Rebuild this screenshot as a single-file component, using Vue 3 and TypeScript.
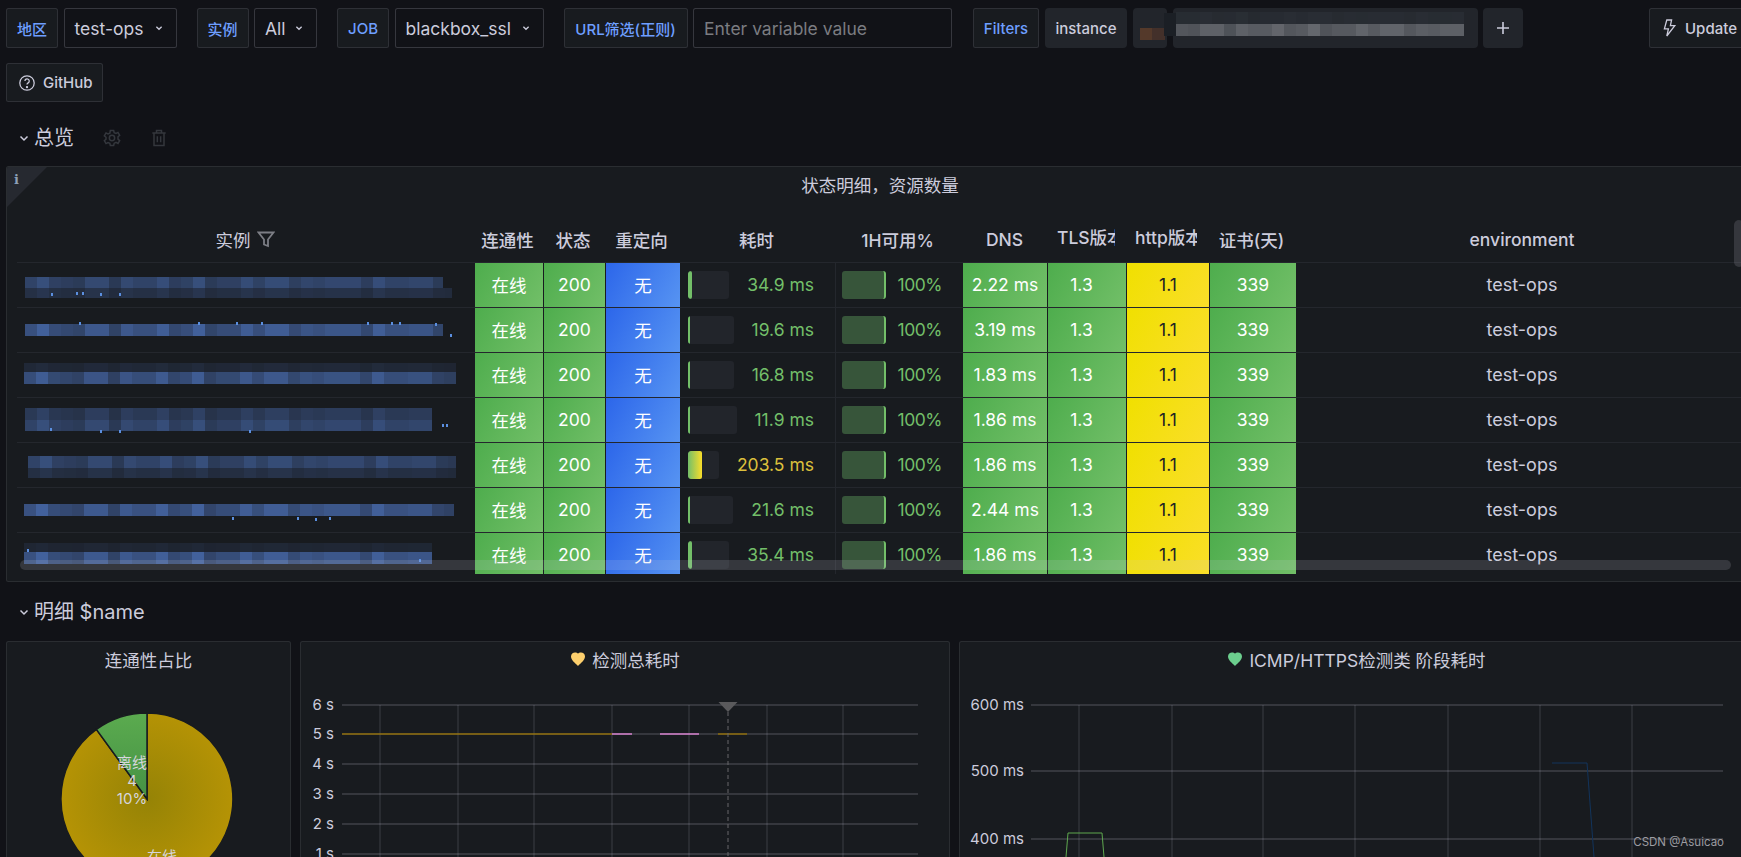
<script setup lang="ts">
const pattern = [0.6, 1, 0.5, 0.4, 0.3, 0.8, 0.8, 0.25, 0.8, 0.6, 0.6, 0.95, 0.4, 0.55, 1, 0.3, 0.5, 0.5, 0.9, 0.55, 0.9, 0.9, 0.45, 0.7, 0.6, 0.75, 0.75, 0.75, 0.4, 0.95, 0.6, 0.6, 0.7, 0.7, 0.3, 0.2]

type Rgb = [number, number, number]

function mosaic(width: number, level: number, from: Rgb, to: Rgb, offset = 0): string {
  const stops: string[] = []
  const count = Math.ceil(width / 12)
  for (let i = 0; i < count; i++) {
    const p = pattern[(i + offset) % pattern.length]
    const t = Math.min(1, level * (0.4 + 0.6 * p))
    const c = from.map((f, k) => Math.round(f + (to[k] - f) * t))
    stops.push(`rgb(${c.join(',')}) ${i * 12}px ${(i + 1) * 12}px`)
  }
  return `linear-gradient(90deg, ${stops.join(', ')})`
}

const navy: Rgb = [27, 31, 39]
const blue: Rgb = [66, 97, 156]

interface Band { x: number; w: number; h: number; level: number }
interface Row {
  top: number
  bands: Band[]
  specks: [number, number][]
  ms: string
  fill: number
  warn?: boolean
  dns: string
}

const rows: Row[] = [
  { top: 14, bands: [{ x: 8, w: 418, h: 11, level: 0.72 }, { x: 8, w: 427, h: 10, level: 0.34 }], specks: [[34, 30], [59, 29], [65, 29], [83, 30], [102, 30]], ms: '34.9 ms', fill: 4, dns: '2.22 ms' },
  { top: 16, bands: [{ x: 8, w: 418, h: 12, level: 0.98 }], specks: [[62, 14], [181, 14], [219, 14], [244, 14], [350, 14], [374, 14], [382, 14], [418, 15], [433, 26]], ms: '19.6 ms', fill: 2, dns: '3.19 ms' },
  { top: 10, bands: [{ x: 7, w: 432, h: 9, level: 0.18 }, { x: 7, w: 432, h: 12, level: 0.92 }], specks: [], ms: '16.8 ms', fill: 2, dns: '1.83 ms' },
  { top: 10, bands: [{ x: 8, w: 407, h: 12, level: 0.52 }, { x: 8, w: 407, h: 11, level: 0.72 }], specks: [[33, 30], [83, 32], [102, 32], [232, 32], [425, 26], [429, 26]], ms: '11.9 ms', fill: 2, dns: '1.86 ms' },
  { top: 13, bands: [{ x: 11, w: 428, h: 12, level: 0.72 }, { x: 11, w: 428, h: 10, level: 0.32 }], specks: [], ms: '203.5 ms', fill: 14, warn: true, dns: '1.86 ms' },
  { top: 16, bands: [{ x: 7, w: 430, h: 12, level: 1 }], specks: [[215, 29], [280, 29], [298, 30], [312, 29]], ms: '21.6 ms', fill: 2, dns: '2.44 ms' },
  { top: 10, bands: [{ x: 7, w: 408, h: 9, level: 0.14 }, { x: 7, w: 408, h: 12, level: 1 }], specks: [[10, 16], [402, 26]], ms: '35.4 ms', fill: 4, dns: '1.86 ms' },
]

const headers = [
  { text: '实例', cls: 'h-inst' },
  { text: '连通性', cls: 'h-cjk' },
  { text: '状态', cls: 'h-cjk' },
  { text: '重定向', cls: 'h-cjk' },
  { text: '耗时', cls: 'h-cjk' },
  { text: '1H可用%', cls: 'h-cjk' },
  { text: 'DNS', cls: 'h-dns' },
  { text: 'TLS版本', cls: 'h-clip' },
  { text: 'http版本', cls: 'h-clip h-http' },
  { text: '证书(天)', cls: 'h-cjk' },
  { text: 'environment', cls: '' },
]

const chipBand = mosaic(288, 0.75, [52, 56, 62], [116, 118, 124], 3)
const chipDim = mosaic(288, 0.2, [34, 37, 43], [70, 80, 90], 9)

const totalGrid = [705, 734, 764, 794, 824, 854]
const totalLabels = ['6 s', '5 s', '4 s', '3 s', '2 s', '1 s']
const totalVert = [380, 458, 534, 612, 689, 767, 843]
const phaseGrid = [705, 771, 839]
const phaseLabels = ['600 ms', '500 ms', '400 ms']
const phaseVert = [1079, 1172, 1263, 1355, 1448, 1540, 1632]
const heartPath = 'M8 15C5 12 1 9 1 5.500 1 3 3 1.500 5 1.500c1.300 0 2.400.5 3 1 .6-.5 1.700-1 3-1 2 0 4 1.500 4 4 0 3.500-4 6.500-7 9.500z'
</script>

<template>
  <div class="viewport">
    <div class="page">
      <div class="toolbar">
        <div class="group">
          <span class="label">地区</span>
          <span class="select sel-region">test-ops
            <svg class="chev" viewBox="0 0 16 16"><path d="M5 6.500l3 3 3-3" /></svg>
          </span>
        </div>
        <div class="group">
          <span class="label">实例</span>
          <span class="select sel-inst">All
            <svg class="chev" viewBox="0 0 16 16"><path d="M5 6.500l3 3 3-3" /></svg>
          </span>
        </div>
        <div class="group">
          <span class="label">JOB</span>
          <span class="select sel-job">blackbox_ssl
            <svg class="chev" viewBox="0 0 16 16"><path d="M5 6.500l3 3 3-3" /></svg>
          </span>
        </div>
        <div class="group">
          <span class="label label-url">URL筛选(正则)</span>
          <span class="input">Enter variable value</span>
        </div>
        <div class="group group-filters">
          <span class="label label-filters">Filters</span>
          <span class="chip chip-key">instance</span>
          <span class="chip chip-op">
            <span class="op-blur"></span>
            <span class="op-bar"></span>
          </span>
          <span class="chip chip-val">
            <span class="blur-dim" :style="{ background: chipDim }"></span>
            <span class="blur-main" :style="{ background: chipBand }"></span>
          </span>
          <span class="chip chip-add">
            <svg viewBox="0 0 16 16" class="plus"><path d="M8 2v12M2 8h12" /></svg>
          </span>
        </div>
        <span class="btn btn-update">
          <svg viewBox="0 0 20 24" class="bolt"><path d="M12 2H6L3 13h5l-2 9 10-13h-5.500z" /></svg>
          Update
        </span>
      </div>

      <div class="links">
        <span class="btn btn-link">
          <svg viewBox="0 0 20 20" class="help">
            <circle cx="10" cy="10" r="8" />
            <path d="M7.700 7.800a2.400 2.400 0 1 1 3.600 2.100c-.9.5-1.300 1-1.300 1.900" />
            <circle class="dot" cx="10" cy="14.500" r=".6" />
          </svg>
          GitHub
        </span>
      </div>

      <div class="section section-first">
        <svg class="sec-chev" viewBox="0 0 16 16"><path d="M4.500 6.500l3.500 3.500 3.500-3.500" /></svg>
        <span class="sec-title">总览</span>
        <svg class="sec-icon gear" viewBox="0 0 24 24">
          <circle cx="12" cy="12" r="3.200" />
          <path d="M10 3h4l.6 2.600 2.200 1 2.400-1.300 2 3.400-2 1.800v2.900l2 1.800-2 3.400-2.400-1.300-2.200 1L14 21h-4l-.6-2.600-2.200-1-2.400 1.300-2-3.400 2-1.800V11.100l-2-1.800 2-3.400 2.400 1.300 2.200-1z" />
        </svg>
        <svg class="sec-icon trash" viewBox="0 0 24 24">
          <path d="M4 6h16M9 6V3h6v3M6 6v15h12V6M10 10v7M14 10v7" />
        </svg>
      </div>

      <div class="panel panel-table">
        <span class="corner"></span>
        <span class="corner-i">i</span>
        <div class="panel-title">状态明细，资源数量</div>
        <div class="table">
          <div class="tr thead">
            <div v-for="h in headers" :key="h.text" class="th" :class="h.cls">
              <span class="th-text">{{ h.text }}</span>
              <svg v-if="h.cls === 'h-inst'" class="filter" viewBox="0 0 18 18">
                <path d="M1.500 2.500h15L11 9.500V16l-4-1.500V9.500z" />
              </svg>
            </div>
          </div>
          <div v-for="(r, i) in rows" :key="i" class="tr">
            <div class="td inst" :style="{ paddingTop: r.top + 'px' }">
              <span
                v-for="(b, j) in r.bands"
                :key="j"
                class="band"
                :style="{ marginLeft: b.x + 'px', width: b.w + 'px', height: b.h + 'px', background: mosaic(b.w, b.level, navy, blue) }"
              ></span>
              <span
                v-for="(s, k) in r.specks"
                :key="'s' + k"
                class="speck"
                :style="{ left: s[0] + 'px', top: s[1] + 'px' }"
              ></span>
            </div>
            <div class="td cell green">在线</div>
            <div class="td cell green">200</div>
            <div class="td cell blue">无</div>
            <div class="td gauge ms" :class="{ warn: r.warn }">
              <span class="track"><span class="fill" :style="{ width: r.fill + 'px' }"></span></span>
              <span class="val">{{ r.ms }}</span>
            </div>
            <div class="td gauge avail">
              <span class="track full"></span>
              <span class="val">100%</span>
            </div>
            <div class="td cell green">{{ r.dns }}</div>
            <div class="td cell green tls">1.3</div>
            <div class="td cell yellow">1.1</div>
            <div class="td cell green">339</div>
            <div class="td env">test-ops</div>
          </div>
        </div>
        <span class="scroll-h"></span>
        <span class="scroll-v"></span>
      </div>

      <div class="section section-second">
        <svg class="sec-chev" viewBox="0 0 16 16"><path d="M4.500 6.500l3.500 3.500 3.500-3.500" /></svg>
        <span class="sec-title">明细 $name</span>
      </div>

      <div class="charts">
        <div class="panel chart">
          <div class="panel-title">连通性占比</div>
          <svg class="plot" viewBox="7 687 283 170">
            <defs>
              <radialGradient id="gold" gradientUnits="userSpaceOnUse" cx="147" cy="798" r="86">
                <stop offset="0" stop-color="#958306" />
                <stop offset="1" stop-color="#b59305" />
              </radialGradient>
              <linearGradient id="leaf" x1="0" y1="0" x2="0" y2="1">
                <stop offset="0" stop-color="#5bab4f" />
                <stop offset="1" stop-color="#459144" />
              </linearGradient>
            </defs>
            <path d="M147 799V713A86 86 0 1 1 96.400 729.400Z" fill="url(#gold)" stroke="#181b1f" stroke-width="1.500" />
            <path d="M147 799L96.400 729.400A86 86 0 0 1 147 713Z" fill="url(#leaf)" stroke="#181b1f" stroke-width="1.500" />
            <text class="pie-text" x="132" y="768">离线</text>
            <text class="pie-text" x="132" y="786">4</text>
            <text class="pie-text" x="132" y="804">10%</text>
            <text class="pie-text" x="162" y="862">在线</text>
          </svg>
        </div>

        <div class="panel chart">
          <div class="panel-title"><svg class="heart" viewBox="0 0 16 16"><path :d="heartPath" fill="#fccf6d" /></svg>检测总耗时</div>
          <svg class="plot" viewBox="301 687 648 170">
            <line v-for="y in totalGrid" :key="y" class="grid-h" x1="342" x2="918" :y1="y" :y2="y" />
            <line v-for="x in totalVert" :key="x" class="grid-v" :x1="x" :x2="x" y1="705" y2="857" />
            <text v-for="(t, k) in totalLabels" :key="t" class="axis" x="334" :y="totalGrid[k] + 5">{{ t }}</text>
            <path d="M342 734H612" class="s-gold" />
            <path d="M612 734H632M660 734H699" class="s-pink" />
            <path d="M718 734H747" class="s-gold" />
            <path d="M728 712V857" class="anno" />
            <path d="M718.500 702H737.500L728 712Z" fill="#5a5a5c" />
          </svg>
        </div>

        <div class="panel chart">
          <div class="panel-title"><svg class="heart" viewBox="0 0 16 16"><path :d="heartPath" fill="#6ccf8e" /></svg>ICMP/HTTPS检测类 阶段耗时</div>
          <svg class="plot" viewBox="960 687 793 170">
            <line v-for="y in phaseGrid" :key="y" class="grid-h" x1="1031" x2="1723" :y1="y" :y2="y" />
            <line v-for="x in phaseVert" :key="x" class="grid-v" :x1="x" :x2="x" y1="705" y2="857" />
            <text v-for="(t, k) in phaseLabels" :key="t" class="axis" x="1024" :y="phaseGrid[k] + 5">{{ t }}</text>
            <path d="M1066 857L1068 833H1102L1104 857" class="s-green" />
            <path d="M1552 763H1587L1594 857" class="s-navy" />
          </svg>
        </div>
      </div>
    </div>
    <span class="watermark">CSDN @Asuicao</span>
  </div>
</template>

<style>
html, body { margin: 0; background: #111217; }
</style>

<style scoped>
.viewport {
  position: relative;
  width: 1741px;
  height: 857px;
  overflow: hidden;
  background: #111217;
  color: #ccccdc;
  font-family: Inter, "Noto Sans CJK SC", sans-serif;
  font-size: 17.5px;
}
.page { width: 1754px; padding-top: 8px; box-sizing: border-box; }

.toolbar { display: flex; gap: 20px; padding-left: 6px; height: 40px; }
.group { display: flex; gap: 5.5px; }
.group-filters { gap: 6px; margin-left: 1px; }
.label, .select, .input, .chip, .btn {
  display: flex;
  align-items: center;
  box-sizing: border-box;
  height: 40px;
  border-radius: 2.5px;
  white-space: nowrap;
}
.label {
  width: 52px;
  justify-content: center;
  background: #181b1f;
  border: 1px solid rgba(204, 204, 220, 0.12);
  color: #6e9fff;
  font-size: 15px;
  font-weight: 500;
}
.label-url { width: 124px; }
.label-filters { width: 66px; }
.select {
  justify-content: space-between;
  padding: 0 10px 0 10px;
  background: #111217;
  border: 1px solid rgba(204, 204, 220, 0.2);
  font-size: 17.5px;
}
.sel-region { width: 113px; }
.sel-inst { width: 63px; }
.sel-job { width: 149px; }
.chev { width: 14px; height: 14px; fill: none; stroke: #ccccdc; stroke-width: 1.5; flex: none; }
.input {
  width: 259px;
  padding-left: 10px;
  background: #111217;
  border: 1px solid rgba(204, 204, 220, 0.2);
  color: #7b7c81;
}
.chip { background: #22252b; border-radius: 4px; font-size: 15px; font-weight: 500; }
.chip-key { width: 82px; justify-content: center; }
.chip-op { position: relative; width: 34px; padding: 11px 0 0 7px; }
.op-blur { width: 25px; height: 12px; background: linear-gradient(90deg, #54392a 0 12px, #43302a 12px 25px); }
.op-bar { position: absolute; left: 31px; top: 5px; width: 12px; height: 23px; background: #1b1f25; }
.chip-val {
  width: 305px;
  padding-left: 3px;
  flex-direction: column;
  align-items: flex-start;
  justify-content: flex-start;
  padding-top: 4px;
}
.blur-dim { width: 288px; height: 12px; }
.blur-main { width: 288px; height: 12px; }
.chip-add { width: 40px; justify-content: center; margin-left: -1px; }
.plus { width: 16px; height: 16px; fill: none; stroke: #ccccdc; stroke-width: 1.6; }
.btn {
  gap: 7px;
  padding: 0 12px;
  background: #181b1f;
  border: 1px solid rgba(204, 204, 220, 0.12);
  font-size: 15px;
  font-weight: 500;
}
.btn-update { margin-left: 106px; width: 120px; flex: none; }
.btn-link { height: 39px; padding: 0 9px 0 11px; gap: 7px; }
.bolt { width: 16px; height: 20px; fill: none; stroke: #ccccdc; stroke-width: 1.6; flex: none; }
.links { display: flex; padding: 15px 0 0 6px; }
.help { width: 18px; height: 18px; fill: none; stroke: #ccccdc; stroke-width: 1.4; flex: none; }
.help .dot { fill: #ccccdc; }

.section { display: flex; align-items: center; padding-left: 16px; }
.section-first { height: 64px; padding-top: 8px; box-sizing: border-box; }
.section-second { height: 59px; }
.sec-chev { width: 16px; height: 16px; fill: none; stroke: #ccccdc; stroke-width: 1.5; margin-right: 2px; }
.sec-title { font-size: 20px; line-height: 26px; }
.sec-icon { width: 20px; height: 20px; fill: none; stroke: #34373d; stroke-width: 1.8; }
.gear { margin-left: 28px; }
.trash { margin-left: 27px; }

.panel {
  position: relative;
  box-sizing: border-box;
  background: #181b1f;
  border: 1px solid rgba(204, 204, 220, 0.1);
  border-radius: 2.5px;
}
.panel-table { margin-left: 6px; height: 416px; overflow: hidden; }
.corner {
  position: absolute;
  left: 0;
  top: 0;
  width: 40px;
  height: 40px;
  background: #262930;
  clip-path: polygon(0 0, 100% 0, 0 100%);
}
.corner-i {
  position: absolute;
  left: 7px;
  top: 5px;
  color: #8ea0b8;
  font: bold 13px/16px "DejaVu Serif", serif;
}
.panel-title {
  display: flex;
  align-items: center;
  justify-content: center;
  gap: 6px;
  height: 34px;
  font-size: 17.5px;
  white-space: nowrap;
}
.table { margin: 16px 0 0 10px; width: 1740px; height: 357px; overflow: hidden; }
.tr {
  display: grid;
  grid-template-columns: 458px 69px 62px 75px 155px 127px 85px 79px 83px 87px 450px;
  height: 45px;
  box-sizing: border-box;
  border-bottom: 1px solid #24272d;
}
.thead { height: 46px; }
.th {
  display: flex;
  align-items: center;
  justify-content: center;
  gap: 6px;
  padding: 0 4px 1px;
  font-size: 17.5px;
  font-weight: 500;
  white-space: nowrap;
  overflow: hidden;
  min-width: 0;
}
.h-cjk { padding: 0 7px 1px 3px; }
.h-dns { padding-right: 6px; }
.h-inst { padding: 0 2px 1px 0; font-weight: 400; }
.h-clip { display: block; padding: 10px 12px 0 9px; line-height: 22px; }
.h-clip .th-text { display: block; overflow: hidden; }
.h-http { padding: 10px 13px 0 8px; }
.filter { width: 18px; height: 18px; fill: none; stroke: #7c7e85; stroke-width: 1.8; }
.td { min-width: 0; box-sizing: border-box; }
.inst { position: relative; display: flex; flex-direction: column; align-items: flex-start; }
.band { display: block; flex: none; }
.speck { position: absolute; width: 2px; height: 3px; background: #5b8fe0; }
.cell {
  display: flex;
  align-items: center;
  justify-content: center;
  padding-bottom: 2px;
  border-right: 1px solid #181b1f;
  color: #fff;
  white-space: nowrap;
}
.tls { padding-right: 11px; }
.green { background: linear-gradient(120deg, #4ead4d, #72bf68); }
.blue { background: linear-gradient(120deg, #2c66ea, #5794f2); }
.yellow { background: linear-gradient(120deg, #f0e000, #fade2a); color: #202226; }
.gauge {
  display: flex;
  align-items: center;
  color: #73bf69;
  padding: 0 21px 0 7px;
  white-space: nowrap;
}
.gauge .val { position: relative; top: -1px; }
.ms { gap: 18px; border-right: 1px solid #24272d; }
.avail { justify-content: space-between; padding: 0 21px 0 6px; }
.avail .val { letter-spacing: -0.5px; }
.warn { color: #dcc03c; }
.track {
  flex: 1;
  height: 28px;
  background: #22252b;
  border-radius: 3px;
  overflow: hidden;
  display: block;
}
.fill { display: block; height: 100%; background: #73bf69; border-radius: 2px; }
.warn .fill { background: linear-gradient(90deg, #73bf69, #fade2a); }
.track.full {
  flex: 0 0 44px;
  background: #37553a;
  border-right: 2px solid #73bf69;
  box-sizing: border-box;
}
.env { display: flex; align-items: center; justify-content: center; padding-bottom: 1px; font-size: 18px; }
.scroll-h {
  position: absolute;
  left: 13px;
  right: 22px;
  top: 393px;
  height: 10px;
  border-radius: 5px;
  background: rgba(204, 204, 220, 0.16);
}
.scroll-v {
  position: absolute;
  left: 1727px;
  top: 53px;
  width: 10px;
  height: 47px;
  border-radius: 5px;
  background: rgba(204, 204, 220, 0.16);
}

.charts {
  display: grid;
  grid-template-columns: 285px 650px 795px;
  gap: 9px;
  padding-left: 6px;
}
.chart { height: 300px; }
.plot { display: block; width: 100%; height: 170px; margin-top: 11px; }
.heart { width: 16px; height: 16px; flex: none; }
.grid-h { stroke: rgba(204, 204, 220, 0.22); stroke-width: 1.5; }
.grid-v { stroke: rgba(204, 204, 220, 0.2); stroke-width: 1; }
.axis { fill: #ccccdc; font-size: 15px; text-anchor: end; }
.pie-text { fill: #d6d6dc; font-size: 15px; text-anchor: middle; }
.s-gold { stroke: #8c6c0a; stroke-width: 1.5; fill: none; }
.s-pink { stroke: #d683ce; stroke-width: 1.5; fill: none; }
.s-green { stroke: #5ea84f; stroke-width: 1; fill: none; }
.s-navy { stroke: #12345c; stroke-width: 1; fill: none; }
.anno { stroke: #66666a; stroke-width: 1; stroke-dasharray: 4 3; fill: none; }
.watermark {
  position: absolute;
  right: 17px;
  top: 834px;
  color: #9d9da2;
  font-size: 11.5px;
  line-height: 16px;
}
</style>
